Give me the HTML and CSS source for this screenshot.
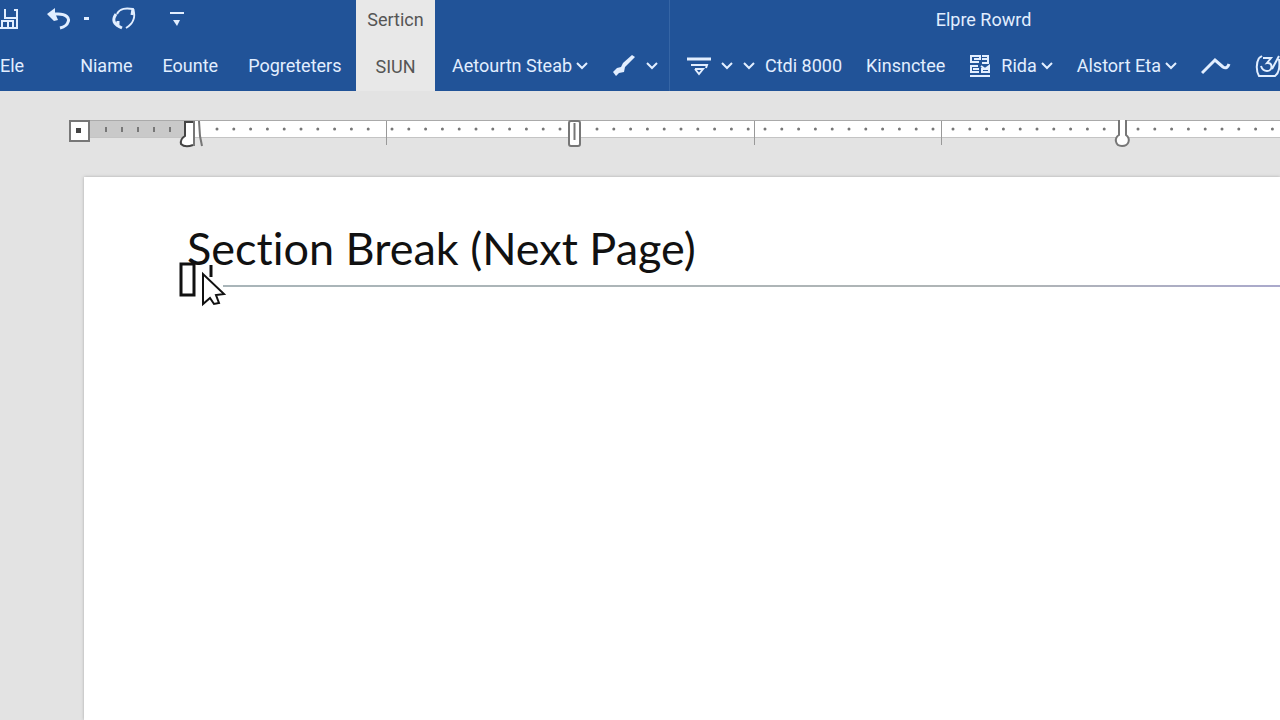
FILE: index.html
```html
<!DOCTYPE html>
<html lang="en">
<head>
  <meta charset="UTF-8" />
  <meta name="viewport" content="width=device-width, initial-scale=1.0" />
  <title>Section Break (Next Page)</title>
  <link rel="stylesheet" href="styles.css">
</head>
<body>
  <header class="ribbon">
    <div class="group group-file">
      <div class="row quick">
        <button class="tool" aria-label="Save">
          <svg width="22" height="28" viewBox="0 0 22 28"><path d="M2 5v19h18V6h-3M8 5v9h12M11 24v-7h-6v7M11 17h5v7"/></svg>
        </button>
        <button class="tool undo" aria-label="Undo">
          <svg width="24" height="28" viewBox="0 0 24 28"><path class="bold" d="M3 10h8c8 0 12 4 10 8-1 4-4 5-8 6"/><path class="fill" d="M0 10l8-6v5l3 7-4 1z"/></svg>
        </button>
        <span class="dot"></span>
        <button class="tool redo" aria-label="Redo">
          <svg width="26" height="28" viewBox="0 0 26 28"><path d="M6 10C9 4 15 4 22 5c3 8 0 15-7 19"/><path class="bold" d="M5 10c-4 6-3 10 6 14M7 17v6M22 5l-1 6"/></svg>
        </button>
        <button class="tool more" aria-label="Customize toolbar">
          <svg width="16" height="28" viewBox="0 0 16 28"><path d="M1 9h14"/><path class="fill" d="M4 16h7l-3 6z"/></svg>
        </button>
      </div>
      <nav class="row tabs">
        <button class="tab-file">Ele</button>
        <button>Niame</button>
        <button>Eounte</button>
        <button>Pogreteters</button>
      </nav>
    </div>
    <button class="tab-active"><span>Serticn</span><span>SIUN</span></button>
    <div class="group group-style">
      <div class="row"></div>
      <div class="row tools">
        <button class="drop">Aetourtn Steab <svg class="chev" viewBox="0 0 12 8"><path d="M1 1l5 5 5-5"/></svg></button>
        <button class="drop brush" aria-label="Format painter">
          <svg width="24" height="24" viewBox="0 0 24 24"><path class="fill" d="M20 1l3 2-10 10-1 5-5 1-3 3-3-4 4-4 4-1 2-4z"/></svg>
          <svg class="chev" viewBox="0 0 12 8"><path d="M1 1l5 5 5-5"/></svg>
        </button>
      </div>
    </div>
    <div class="group group-layout">
      <div class="row title">Elpre Rowrd</div>
      <div class="row tools layout">
        <button class="drop filter" aria-label="Filter">
          <svg width="24" height="20" viewBox="0 0 24 20"><path class="bold" d="M0 3h24"/><path d="M4 9h16l-1 3M8 13h8l-4 5-4-5"/></svg>
          <svg class="chev" viewBox="0 0 12 8"><path d="M1 1l5 5 5-5"/></svg>
          <svg class="chev" viewBox="0 0 12 8"><path d="M1 1l5 5 5-5"/></svg>
        </button>
        <button class="value">Ctdi 8000</button>
        <button>Kinsnctee</button>
        <button class="drop grid">
          <svg width="22" height="24" viewBox="0 0 22 24"><path d="M2 9V2h9v3H5M2 8h8M13 2h6v7M13 5h6M13 9h7M9 12H2v6h8M4 15h6M12 12l4 3 4-3v6h-7v-3h6M1 22h20"/></svg>
          Rida <svg class="chev" viewBox="0 0 12 8"><path d="M1 1l5 5 5-5"/></svg>
        </button>
        <button class="drop">Alstort Eta <svg class="chev" viewBox="0 0 12 8"><path d="M1 1l5 5 5-5"/></svg></button>
        <button aria-label="Line">
          <svg width="30" height="18" viewBox="0 0 30 18"><path class="bold" d="M1 16L14 3l8 7c3 2 5 0 6-3"/></svg>
        </button>
        <button aria-label="Rotate">
          <svg width="28" height="24" viewBox="0 0 28 24"><path d="M4 4C1 9 1 17 4 22h16c4-3 5-10 4-17M4 4l3-2M8 4h8l-4 5c6-1 6 8 0 8-3 0-5-2-6-5M24 2l-7 13"/></svg>
        </button>
      </div>
    </div>
  </header>

  <main class="workspace">
    <div class="ruler">
      <svg width="2000" height="32" viewBox="0 0 2000 32">
        <rect class="margin" x="20" y="2" width="98" height="17"/>
        <rect class="scale" x="118" y="2" width="1882" height="17"/>
        <path class="edge" d="M0 2.500h2000"/>
        <path class="edge light" d="M20 19.500h2000"/>
        <rect class="box" x="1" y="3" width="19" height="20"/>
        <rect class="mark" x="7" y="10" width="5" height="5"/>
        <!-- minor divisions -->
        <path class="minor" d="M37 9v5M53 9v5M69 9v5M85 9v5M101 9v5"/>
        <path class="dots" d="M148 11h154M323 11h170M528 11h154M696 11h172M884 11h154M1069 11h900"/>
        <!-- major divisions -->
        <path class="major" d="M317.500 3v24M685.500 3v24M872.500 3v24"/>
        <!-- indent handles -->
        <path class="handle dark" d="M125 4h-9v14q-5 3-4 8q4 4 12 1"/>
        <path class="handle" d="M125 3v25M130 3l1 15 2 10"/>
        <rect class="handle" x="500" y="3" width="11" height="25" rx="2"/>
        <path class="handle" d="M505.500 5v17"/>
        <path class="handle" d="M1050 2v15c-5 3-4 11 3 11s9-7 4-11V2"/>
      </svg>
    </div>
    <article class="page">
      <h1 class="break">Section Break (Next Page)
        <svg class="pointer" width="52" height="50" viewBox="0 0 52 50">
          <path class="caret" d="M4 10h13v31H4z"/>
          <path class="stem" d="M34 11v12"/>
          <path class="arrow" d="M26 20v30l7-6 4 6 5-1-3-8 8-1z"/>
        </svg>
      </h1>
      <hr class="rule">
    </article>
  </main>
</body>
</html>
```
FILE: styles.css
```css
* { box-sizing: border-box; }
body {
  margin: 0; min-height: 100vh; overflow: hidden;
  display: flex; flex-direction: column;
  font-family: Roboto, sans-serif; background: #e3e3e3;
}
button {
  margin: 0; padding: 0; border: none; background: none;
  font: inherit; color: inherit; white-space: nowrap; flex-shrink: 0;
}
svg { display: block; flex-shrink: 0; }

/* ribbon */
.ribbon {
  display: flex; height: 91px; overflow: hidden;
  background: #215398; color: #e2eeff; font-size: 18px; line-height: 24px;
}
.ribbon path { fill: none; stroke: #e2eeff; stroke-width: 2; }
.ribbon .bold { stroke-width: 3; }
.ribbon .fill { fill: #e2eeff; stroke: none; }
.group { display: flex; flex-direction: column; }
.row { display: flex; align-items: center; height: 40px; flex-shrink: 0; }
.row + .row { height: 52px; }
.group-file { width: 356px; flex-shrink: 0; }
.quick { padding-bottom: 4px; margin-left: -3px; }
.undo { margin-left: 28px; }
.dot { width: 5px; height: 3px; margin-left: 13px; background: #e2eeff; }
.redo { margin-left: 22px; }
.more { margin-left: 32px; }
.tabs { gap: 30px; }
.tab-file { margin-right: 26px; }
.tab-active {
  width: 79px; padding-top: 8px; background: #e8e8e8; color: #555;
  display: flex; flex-direction: column; align-items: center; gap: 23px;
}
.group-style { width: 235px; flex-shrink: 0; padding-left: 17px; border-right: 1px solid #3565a5; }
.group-layout { flex: 1; min-width: 0; padding-left: 17px; }
.title { justify-content: center; }
.tools { gap: 24px; }
.drop { display: flex; align-items: center; gap: 4px; }
.chev { width: 12px; height: 8px; }
.brush, .filter { gap: 10px; }
.value { margin-left: -14px; }
.grid svg:first-child { margin-right: 6px; }

/* document */
.workspace { flex: 1; display: flex; flex-direction: column; padding: 27px 0 0 69px; }
.ruler { height: 32px; overflow: hidden; }
.ruler path { fill: none; }
.margin { fill: #c9c9c9; }
.scale { fill: #fff; }
.ruler .edge { stroke: #aaa; stroke-width: 1; }
.ruler .light { stroke: #c4c4c4; }
.box { fill: #fff; stroke: #777; stroke-width: 2; }
.mark { fill: #444; }
.minor { stroke: #777; stroke-width: 2; }
.dots { stroke: #777; stroke-width: 3; stroke-linecap: round; stroke-dasharray: 0 16.8; }
.major { stroke: #999; stroke-width: 1; }
.ruler .handle { fill: #fff; stroke: #777; stroke-width: 2; }
.ruler .dark { stroke: #444; }
.page {
  flex: 1; margin: 27px 0 0 15px; padding: 41px 0 0 103px;
  background: #fff; box-shadow: 0 0 3px #aaa;
}
.break {
  position: relative; margin: 0; font: 400 45px/60px Lato, sans-serif;
  font-variant-ligatures: none; color: #111; white-space: nowrap;
}
.pointer { position: absolute; left: -10px; top: 36px; overflow: visible; }
.pointer path { fill: #fff; stroke: #111; stroke-width: 3; }
.pointer .arrow { stroke-width: 2; }
.rule { height: 2px; margin: 7px 0 0 36px; border: none; background: linear-gradient(90deg, #a9b5b9, #b0b5b6 75%, #aaa9cc); }
```
